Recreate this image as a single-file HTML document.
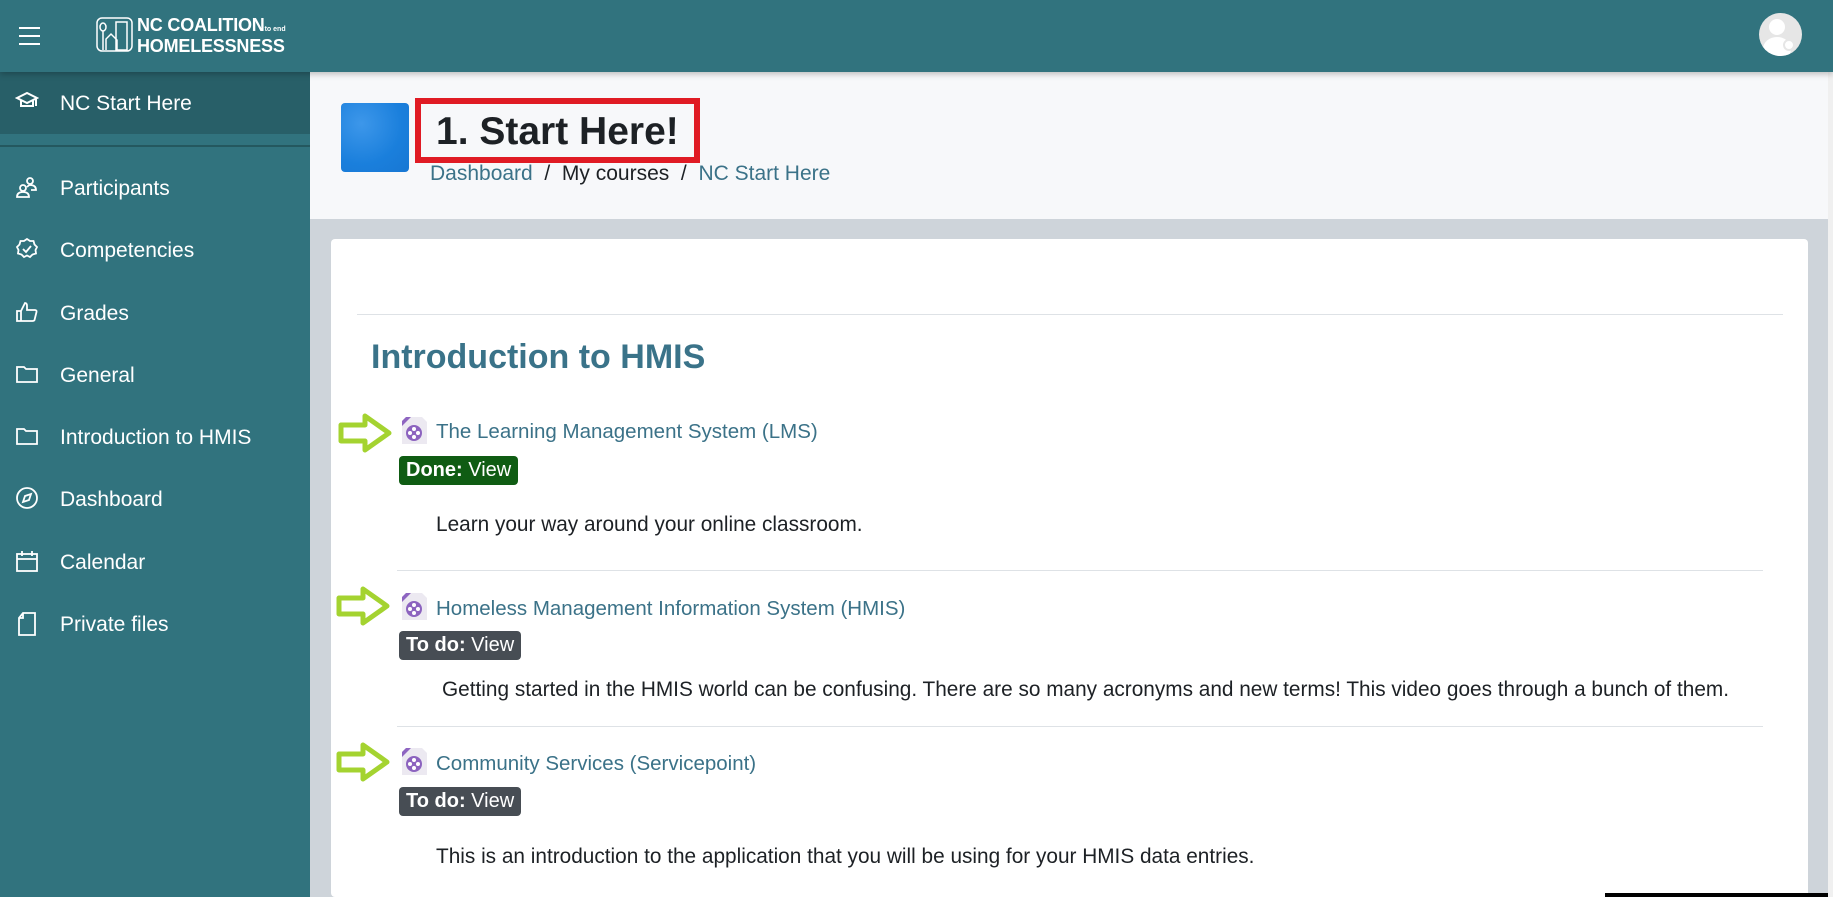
<!DOCTYPE html>
<html><head><meta charset="utf-8"><style>
*{margin:0;padding:0;box-sizing:border-box}
body{width:1833px;height:897px;overflow:hidden;font-family:"Liberation Sans",sans-serif;background:#ced4da;position:relative}
.abs{position:absolute}
#hdr{left:0;top:0;width:1833px;height:72px;background:#31737e;box-shadow:0 2px 6px rgba(0,0,0,.25);z-index:3}
#side{left:0;top:72px;width:310px;height:825px;background:#31737e;z-index:2}
.nav{position:absolute;left:0;width:310px;color:#fff;font-size:21px;height:30px;line-height:30px}
.nav span{position:absolute;left:60px;top:2px}
.nav svg{position:absolute;left:15px;top:3px}
#phead{left:310px;top:72px;width:1518px;height:147px;background:#f7f8fa}
#card{left:331px;top:239px;width:1477px;height:658px;background:#fff;border-radius:4px}
.link{color:#3b7288;font-size:20.5px;position:absolute;left:436px}
.badge{position:absolute;left:399px;height:29px;border-radius:4px;color:#fff;font-size:20px;line-height:29px;padding:0 7px}
.desc{position:absolute;font-size:20.8px;color:#1d2125}
.sep{position:absolute;left:397px;width:1366px;height:1px;background:#dee2e6}
</style></head><body>
<div id="hdr" class="abs">
 <div class="abs" style="left:19px;top:27px;width:21px;height:2px;background:#fff"></div>
 <div class="abs" style="left:19px;top:35px;width:21px;height:2px;background:#fff"></div>
 <div class="abs" style="left:19px;top:43px;width:21px;height:2px;background:#fff"></div>
 <svg class="abs" style="left:96px;top:17px" width="37" height="35" viewBox="0 0 37 35" fill="none" stroke="#fff" stroke-width="1.5"><rect x="1" y="1" width="35" height="33" rx="5"/><rect x="20" y="5" width="11" height="28"/><path d="M7 33V14M4 10a3 4 0 1 1 6 0a3 4 0 0 1-6 0M10 33V22l5-5 6 6v10"/></svg>
 <div class="abs" style="left:137px;top:17px;color:#fff;font-weight:bold;font-size:18px;line-height:17px;letter-spacing:-.2px">NC COALITION<span style="font-size:7px;letter-spacing:0">to end</span><br>HOMELESSNESS</div>
 <div class="abs" style="left:1759px;top:13px;width:43px;height:43px;border-radius:50%;background:#e6e6e6;overflow:hidden">
  <div class="abs" style="left:10px;top:6px;width:16px;height:16px;border-radius:50%;background:#fff"></div>
  <div class="abs" style="left:4px;top:24px;width:28px;height:24px;border-radius:50%;background:#fff"></div>
  <div class="abs" style="left:24px;top:26px;width:12px;height:12px;border-radius:50%;background:#fff;border:2px solid #e6e6e6"></div>
 </div>
</div>
<div id="side" class="abs">
 <div class="abs" style="left:0;top:0;width:310px;height:62px;background:#285f68"></div>
 <div class="abs" style="left:0;top:73px;width:310px;height:2px;background:#24585f"></div>
 <div class="nav" style="top:15px"><svg width="24" height="22" viewBox="0 0 24 22" fill="none" stroke="#fff" stroke-width="2"><path d="M2 8l10-5 10 5-10 5z M6 10v6h12v-6M21 9v7"/></svg><span>NC Start Here</span></div>
 <div class="nav" style="top:100px"><svg width="24" height="24" viewBox="0 0 24 24" fill="none" stroke="#fff" stroke-width="1.8"><circle cx="8" cy="13" r="3"/><path d="M2 22c0-4 3-5 6-5s6 1 6 5z"/><circle cx="15" cy="6" r="3"/><path d="M12 12c1-1 2-2 3-2 3 0 6 1 6 5h-5"/></svg><span>Participants</span></div>
 <div class="nav" style="top:162px"><svg width="24" height="24" viewBox="0 0 24 24" fill="none" stroke="#fff" stroke-width="1.8"><path d="M12 2l3 2 3.5 0 1 3.5 2.5 2.5-1.5 3 .5 3.5-3.5 1-2.5 2.5-3-1.5-3 1.5-2.5-2.5-3.5-1 .5-3.5L2 10l2.5-2.5 1-3.5H9z"/><path d="M8 12l3 3 5-6"/></svg><span>Competencies</span></div>
 <div class="nav" style="top:225px"><svg width="24" height="24" viewBox="0 0 24 24" fill="none" stroke="#fff" stroke-width="1.8"><path d="M2 11h4v10H2zM6 11l4-8c2 0 2 2 2 3v4h8c1 0 2 1 1.5 2l-2 8c0 .5-1 1-2 1H6"/></svg><span>Grades</span></div>
 <div class="nav" style="top:287px"><svg width="24" height="24" viewBox="0 0 24 24" fill="none" stroke="#fff" stroke-width="1.8"><path d="M2 5h7l2 2h11v13H2z"/></svg><span>General</span></div>
 <div class="nav" style="top:349px"><svg width="24" height="24" viewBox="0 0 24 24" fill="none" stroke="#fff" stroke-width="1.8"><path d="M2 5h7l2 2h11v13H2z"/></svg><span>Introduction to HMIS</span></div>
 <div class="nav" style="top:411px"><svg width="24" height="24" viewBox="0 0 24 24" fill="none" stroke="#fff" stroke-width="1.8"><circle cx="12" cy="12" r="10"/><path d="M16 8l-2 6-6 2 2-6z"/></svg><span>Dashboard</span></div>
 <div class="nav" style="top:474px"><svg width="24" height="24" viewBox="0 0 24 24" fill="none" stroke="#fff" stroke-width="1.8"><rect x="2" y="5" width="20" height="17"/><path d="M2 10h20M7 2v5M17 2v5"/></svg><span>Calendar</span></div>
 <div class="nav" style="top:536px"><svg width="24" height="26" viewBox="0 0 24 26" fill="none" stroke="#fff" stroke-width="1.8"><path d="M8 2h12v22H4V7z M8 2v5H4"/></svg><span>Private files</span></div>
</div>
<div id="phead" class="abs"></div>
<div class="abs" style="left:1828px;top:72px;width:5px;height:825px;background:#f0f0f0"></div>
<div class="abs" style="left:341px;top:103px;width:68px;height:69px;border-radius:4px;background:radial-gradient(circle at 30% 30%,#3d97ea,#1a7fdc 60%,#1877d3)"></div>
<div class="abs" style="left:415px;top:98px;width:285px;height:65px;border:6px solid #e01b24"></div>
<div class="abs" style="left:436px;top:110px;font-size:39px;font-weight:bold;color:#1d2125;line-height:44px">1. Start Here!</div>
<div class="abs" style="left:430px;top:161px;font-size:21px;line-height:26px;color:#1d2125"><span style="color:#3b7288">Dashboard</span> &nbsp;/&nbsp; My courses &nbsp;/&nbsp; <span style="color:#3b7288">NC Start Here</span></div>
<div id="card" class="abs"></div>
<div class="abs" style="left:357px;top:314px;width:1426px;height:1px;background:#dee2e6"></div>
<div class="abs" style="left:371px;top:337px;font-size:34px;font-weight:bold;color:#3a7389;line-height:40px">Introduction to HMIS</div>

<svg width="0" height="0" style="position:absolute"><defs>
<symbol id="arr" viewBox="0 0 54 40"><path d="M3 12h24V3l24 17-24 17v-9H3z" fill="none" stroke="#a4d330" stroke-width="5" stroke-linejoin="round"/></symbol>
<symbol id="ico" viewBox="0 0 28 30"><path d="M6 1h16l5 5v22H2V5z" fill="#ece9f1"/><path d="M2 5l4-4h5L2 10z" fill="#8e65c1"/><circle cx="14" cy="17" r="8" fill="#8c63bf"/><circle cx="14" cy="13" r="2" fill="#fff"/><circle cx="14" cy="21" r="2" fill="#fff"/><circle cx="10" cy="17" r="2" fill="#fff"/><circle cx="18" cy="17" r="2" fill="#fff"/></symbol>
</defs></svg>

<svg class="abs" style="left:338px;top:413px" width="54" height="40"><use href="#arr"/></svg>
<svg class="abs" style="left:400px;top:416px" width="28" height="30"><use href="#ico"/></svg>
<div class="link" style="top:420px">The Learning Management System (LMS)</div>
<div class="badge" style="top:456px;background:#0f5c13"><b>Done:</b> View</div>
<div class="desc" style="left:436px;top:513px">Learn your way around your online classroom.</div>
<div class="sep" style="top:570px"></div>

<svg class="abs" style="left:336px;top:586px" width="54" height="40"><use href="#arr"/></svg>
<svg class="abs" style="left:400px;top:592px" width="28" height="30"><use href="#ico"/></svg>
<div class="link" style="top:597px">Homeless Management Information System (HMIS)</div>
<div class="badge" style="top:631px;background:#474d54"><b>To do:</b> View</div>
<div class="desc" style="left:442px;top:678px">Getting started in the HMIS world can be confusing. There are so many acronyms and new terms! This video goes through a bunch of them.</div>
<div class="sep" style="top:726px"></div>

<svg class="abs" style="left:336px;top:742px" width="54" height="40"><use href="#arr"/></svg>
<svg class="abs" style="left:400px;top:747px" width="28" height="30"><use href="#ico"/></svg>
<div class="link" style="top:752px">Community Services (Servicepoint)</div>
<div class="badge" style="top:787px;background:#474d54"><b>To do:</b> View</div>
<div class="desc" style="left:436px;top:845px">This is an introduction to the application that you will be using for your HMIS data entries.</div>

<div class="abs" style="left:1605px;top:893px;width:223px;height:4px;background:#000"></div>
</body></html>
